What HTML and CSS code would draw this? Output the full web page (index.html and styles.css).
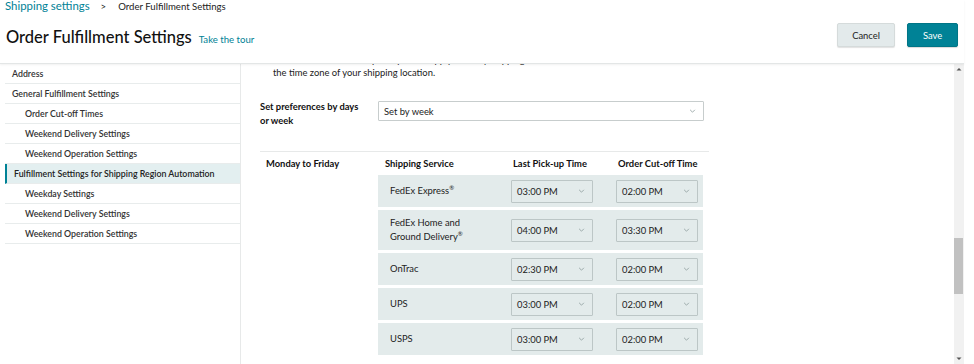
FILE: index.html
```html
<!DOCTYPE html>
<html lang="en">
<head>
  <meta charset="UTF-8">
  <meta name="viewport" content="width=device-width, initial-scale=1.0">
  <title>Order Fulfillment Settings</title>
  <link rel="stylesheet" href="styles.css">
</head>
<body>
  <div class="page">
    <header class="topbar">
      <div class="titles">
        <nav class="crumbs">
          <a href="#">Shipping settings</a><span class="crumb-sep">&gt;</span><span>Order Fulfillment Settings</span>
        </nav>
        <div class="title-row">
          <h1>Order Fulfillment Settings</h1>
          <a href="#" class="tour">Take the tour</a>
        </div>
      </div>
      <div class="actions">
        <button class="btn btn-cancel">Cancel</button>
        <button class="btn btn-save">Save</button>
      </div>
    </header>

    <div class="workspace">
      <aside class="sidenav">
        <ul>
          <li>Address</li>
          <li>General Fulfillment Settings</li>
          <li class="sub">Order Cut-off Times</li>
          <li class="sub">Weekend Delivery Settings</li>
          <li class="sub">Weekend Operation Settings</li>
          <li class="active">Fulfillment Settings for Shipping Region Automation</li>
          <li class="sub">Weekday Settings</li>
          <li class="sub">Weekend Delivery Settings</li>
          <li class="sub">Weekend Operation Settings</li>
        </ul>
      </aside>

      <main class="content">
        <p class="note">Order cut-off times and pick-up times apply to every shipping service and are shown in<br>the time zone of your shipping location.</p>

        <div class="pref-row">
          <label class="pref-label">Set preferences by days or week</label>
          <div class="dropdown dropdown-wide">
            <span>Set by week</span>
            <svg class="chevron" viewBox="0 0 8 5"><path d="M1 1l3 3 3-3"/></svg>
          </div>
        </div>

        <section class="schedule">
          <div class="day-label">Monday to Friday</div>
          <div class="service-table">
            <div class="table-head">
              <div>Shipping Service</div>
              <div>Last Pick-up Time</div>
              <div>Order Cut-off Time</div>
            </div>

            <div class="service-row">
              <div class="service-name">FedEx Express<sup>&reg;</sup></div>
              <div class="dropdown"><span>03:00 PM</span><svg class="chevron" viewBox="0 0 8 5"><path d="M1 1l3 3 3-3"/></svg></div>
              <div class="dropdown"><span>02:00 PM</span><svg class="chevron" viewBox="0 0 8 5"><path d="M1 1l3 3 3-3"/></svg></div>
            </div>
            <div class="service-row">
              <div class="service-name">FedEx Home and<br>Ground Delivery<sup>&reg;</sup></div>
              <div class="dropdown"><span>04:00 PM</span><svg class="chevron" viewBox="0 0 8 5"><path d="M1 1l3 3 3-3"/></svg></div>
              <div class="dropdown"><span>03:30 PM</span><svg class="chevron" viewBox="0 0 8 5"><path d="M1 1l3 3 3-3"/></svg></div>
            </div>
            <div class="service-row">
              <div class="service-name">OnTrac</div>
              <div class="dropdown"><span>02:30 PM</span><svg class="chevron" viewBox="0 0 8 5"><path d="M1 1l3 3 3-3"/></svg></div>
              <div class="dropdown"><span>02:00 PM</span><svg class="chevron" viewBox="0 0 8 5"><path d="M1 1l3 3 3-3"/></svg></div>
            </div>
            <div class="service-row">
              <div class="service-name">UPS</div>
              <div class="dropdown"><span>03:00 PM</span><svg class="chevron" viewBox="0 0 8 5"><path d="M1 1l3 3 3-3"/></svg></div>
              <div class="dropdown"><span>02:00 PM</span><svg class="chevron" viewBox="0 0 8 5"><path d="M1 1l3 3 3-3"/></svg></div>
            </div>
            <div class="service-row">
              <div class="service-name">USPS</div>
              <div class="dropdown"><span>03:00 PM</span><svg class="chevron" viewBox="0 0 8 5"><path d="M1 1l3 3 3-3"/></svg></div>
              <div class="dropdown"><span>02:00 PM</span><svg class="chevron" viewBox="0 0 8 5"><path d="M1 1l3 3 3-3"/></svg></div>
            </div>
          </div>
        </section>
      </main>

      <div class="scrollbar">
        <svg class="scroll-arrow" viewBox="0 0 10 6"><path d="M2.5 4.5h5L5 2z"/></svg>
        <div class="scroll-track">
          <div class="scroll-thumb"></div>
        </div>
        <svg class="scroll-arrow" viewBox="0 0 10 6"><path d="M2.5 1.5h5L5 4z"/></svg>
      </div>
    </div>
  </div>
</body>
</html>
```

FILE: styles.css
```css
body {
  font-family: Lato, 'Liberation Sans', Arial, sans-serif;
  font-size: 9.4px;
  margin: 0;
  padding: 0;
  background-color: #fff;
  color: #111;
}

a {
  color: #008296;
  text-decoration: none;
}

.page {
  width: 964px;
  height: 364px;
  display: flex;
  flex-direction: column;
}

/* Header */

.topbar {
  height: 63px;
  flex-shrink: 0;
  display: flex;
  justify-content: space-between;
  padding: 0 6px 0 5px;
  border-bottom: 1px solid #e3e6e6;
  box-shadow: 0 1px 2px rgba(0, 0, 0, 0.06);
  position: relative;
  z-index: 1;
  background-color: #fff;
}

.crumbs {
  font-size: 9.6px;
  line-height: 12px;
  color: #222;
}

.crumbs a {
  font-size: 11.4px;
}

.crumb-sep {
  margin: 0 12px 0 11px;
}

.title-row {
  display: flex;
  align-items: baseline;
  gap: 7px;
  margin-top: 14px;
  padding-left: 1px;
}

h1 {
  font-size: 16.5px;
  font-weight: 500;
  line-height: 20px;
  margin: 0;
  color: #111;
}

.tour {
  font-size: 9.6px;
}

.actions {
  display: flex;
  gap: 12px;
  margin-top: 23px;
}

.btn {
  height: 24px;
  font-family: inherit;
  font-size: 9.4px;
  border-radius: 2px;
  cursor: pointer;
  padding: 0;
}

.btn-cancel {
  width: 58px;
  background-color: #e3eaeb;
  border: 1px solid #d5dbdb;
  color: #222;
  box-shadow: 0 1px 1px rgba(0, 0, 0, 0.12);
}

.btn-save {
  width: 51px;
  background-color: #008296;
  border: 1px solid #007586;
  color: #fff;
  box-shadow: 0 1px 1px rgba(0, 0, 0, 0.15);
}

/* Body */

.workspace {
  flex: 1;
  display: flex;
  overflow: hidden;
}

.sidenav {
  width: 240px;
  flex-shrink: 0;
  border-right: 1px solid #e7e9e9;
}

.sidenav ul {
  list-style: none;
  margin: 0 0 0 5px;
  padding: 0;
}

.sidenav li {
  height: 19px;
  line-height: 19px;
  padding-left: 7px;
  border-bottom: 1px solid #e8ecec;
  font-size: 8.8px;
  font-weight: 600;
  color: #333;
  white-space: nowrap;
}

.sidenav li.sub {
  padding-left: 20px;
}

.sidenav li.active {
  background-color: #e3eff0;
  border-left: 2px solid #008296;
  color: #222;
}

.content {
  flex: 1;
  padding-left: 19px;
}

.note {
  margin: -11px 0 0 13px;
  line-height: 13px;
  color: #222;
}

.pref-row {
  display: flex;
  align-items: flex-start;
  margin-top: 22px;
  width: 444px;
}

.pref-label {
  width: 118px;
  box-sizing: border-box;
  padding-right: 14px;
  flex-shrink: 0;
  font-weight: 700;
  line-height: 14px;
  margin-top: -1px;
}

.dropdown {
  display: flex;
  justify-content: space-between;
  align-items: center;
  width: 82px;
  height: 23px;
  box-sizing: border-box;
  padding: 0 7px 0 5px;
  border: 1px solid #bcc6c6;
  border-radius: 1px;
  color: #222;
}

.dropdown-wide {
  flex: 1;
  height: 20px;
  background-color: #fff;
  border-color: #c7cdcd;
}

.chevron {
  width: 7px;
  height: 4px;
  fill: none;
  stroke: #8c9a9a;
  stroke-width: 1;
}

.schedule {
  display: flex;
  width: 449px;
  margin-top: 23px;
  padding-top: 5px;
  border-top: 1px solid #e7e9e9;
}

.day-label {
  width: 112px;
  padding-left: 6px;
  font-weight: 700;
  line-height: 13px;
}

.service-table {
  width: 325px;
  display: flex;
  flex-direction: column;
  gap: 3px;
}

.table-head,
.service-row {
  display: grid;
  grid-template-columns: 133px 105px 81px;
  align-items: center;
}

.table-head {
  font-weight: 700;
  line-height: 13px;
  margin-bottom: 2px;
  white-space: nowrap;
}

.table-head div {
  padding-left: 2px;
}

.table-head div:first-child {
  padding-left: 7px;
}

.service-row {
  min-height: 32px;
  background-color: #e3ebeb;
}

.service-name {
  padding: 6px 0 6px 12px;
  line-height: 14px;
  color: #222;
}

.service-name sup {
  font-size: 6px;
  vertical-align: 4px;
  line-height: 0;
}

/* Fake scrollbar */

.scrollbar {
  width: 10px;
  flex-shrink: 0;
  display: flex;
  flex-direction: column;
  background-color: #f1f1f1;
}

.scroll-arrow {
  width: 10px;
  height: 6px;
  fill: #555;
  margin: 2px 0;
}

.scroll-track {
  flex: 1;
  display: flex;
  flex-direction: column;
  padding-top: 164px;
}

.scroll-thumb {
  height: 56px;
  width: 9px;
  background-color: #c1c1c1;
}
```
